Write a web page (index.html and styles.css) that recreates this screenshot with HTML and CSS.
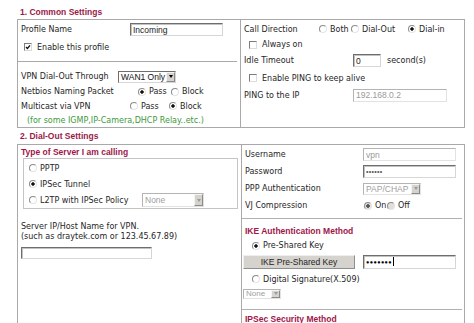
FILE: index.html
```html
<!DOCTYPE html>
<html>
<head>
<meta charset="utf-8">
<link rel="stylesheet" href="styles.css">
</head>
<body>
<div class="page">
  <div class="sec-title">1. Common Settings</div>
  <div class="box box1">
    <div class="col col-l">
      <div class="row h19"><span class="lbl w112">Profile Name</span><span class="fld f-profile">Incoming</span></div>
      <div class="row h16 ind6"><span class="chk"><svg viewBox="0 0 6 6"><path d="M1 3 L2.4 4.5 L5 1.3" /></svg></span><span class="ctext">Enable this profile</span></div>
      <div class="sep1"></div>
      <div class="row h15"><span class="lbl w100">VPN Dial-Out Through</span><span class="sel s-wan"><span class="sel-text">WAN1 Only</span><span class="arr"></span></span></div>
      <div class="row h15"><span class="lbl w120">Netbios Naming Packet</span><span class="opt o33"><span class="rd on"></span>Pass</span><span class="opt"><span class="rd"></span>Block</span></div>
      <div class="row h14"><span class="lbl w112">Multicast via VPN</span><span class="opt o39"><span class="rd"></span>Pass</span><span class="opt"><span class="rd on"></span>Block</span></div>
      <div class="row h14 note">(for some IGMP,IP-Camera,DHCP Relay..etc.)</div>
    </div>
    <div class="col col-r">
      <div class="row h18"><span class="lbl w78">Call Direction</span><span class="opt o32"><span class="rd"></span>Both</span><span class="opt o57"><span class="rd"></span>Dial-Out</span><span class="opt"><span class="rd on"></span>Dial-in</span></div>
      <div class="row h13 ind8"><span class="chk"></span><span class="ctext">Always on</span></div>
      <div class="row h19"><span class="lbl w112">Idle Timeout</span><span class="fld f-idle">0</span><span class="unit">second(s)</span></div>
      <div class="row h16 ind8"><span class="chk"></span><span class="ctext">Enable PING to keep alive</span></div>
      <div class="row h18"><span class="lbl w112">PING to the IP</span><span class="fld f-ping dis">192.168.0.2</span></div>
    </div>
  </div>

  <div class="sec-title t2">2. Dial-Out Settings</div>
  <div class="box box2">
    <div class="col col-l2">
      <div class="sub-title st-type">Type of Server I am calling</div>
      <div class="inner">
        <div class="row h16"><span class="opt"><span class="rd"></span>PPTP</span></div>
        <div class="row h16"><span class="opt"><span class="rd on"></span>IPSec Tunnel</span></div>
        <div class="row h16"><span class="opt o113"><span class="rd"></span>L2TP with IPSec Policy</span><span class="sel s-none dis"><span class="sel-text">None</span><span class="arr"></span></span></div>
      </div>
      <div class="server">
        <div class="line">Server IP/Host Name for VPN.</div>
        <div class="line">(such as draytek.com or 123.45.67.89)</div>
        <span class="fld f-server"></span>
      </div>
    </div>
    <div class="col col-r2">
      <div class="row h17 first"><span class="lbl w121">Username</span><span class="fld f-wide dis">vpn</span></div>
      <div class="row h17"><span class="lbl w121">Password</span><span class="fld f-wide pw">&#8226;&#8226;&#8226;&#8226;&#8226;&#8226;</span></div>
      <div class="row h17"><span class="lbl w121">PPP Authentication</span><span class="sel s-pap dis"><span class="sel-text">PAP/CHAP</span><span class="arr"></span></span></div>
      <div class="row h17"><span class="lbl w122">VJ Compression</span><span class="opt o23"><span class="rd on gray"></span>On</span><span class="opt"><span class="rd gray"></span>Off</span></div>
      <div class="sep2"></div>
      <div class="sub-title st-ike">IKE Authentication Method</div>
      <div class="row h15 ind10"><span class="opt"><span class="rd on"></span>Pre-Shared Key</span></div>
      <div class="row h17"><span class="btn">IKE Pre-Shared Key</span><span class="fld f-key"><span class="dots">&#9679;&#9679;&#9679;&#9679;&#9679;&#9679;&#9679;</span><span class="caret"></span></span></div>
      <div class="row h18 ind10"><span class="opt"><span class="rd"></span>Digital Signature(X.509)</span></div>
      <div class="row h11"><span class="sel s-none2 dis"><span class="sel-text">None</span><span class="arr"></span></span></div>
      <div class="sep3"></div>
      <div class="sub-title st-ipsec">IPSec Security Method</div>
    </div>
  </div>
</div>
</body>
</html>
```
FILE: styles.css
```css
html, body {
  margin: 0;
  background: #fff;
}
body {
  font-family: "DejaVu Sans", Verdana, sans-serif;
  font-size: 8px;
  color: #262626;
  overflow: hidden;
}
.page {
  padding-left: 17px;
  width: 448px;
}
.sec-title {
  height: 19px;
  box-sizing: border-box;
  padding: 7px 0 0 3px;
  font-family: "Liberation Sans", Arial, sans-serif;
  font-weight: bold;
  font-size: 8.5px;
  line-height: 10px;
  color: #991a48;
}
.sec-title.t2 {
  height: 16px;
  padding-top: 3px;
}
.box {
  border: 1px solid #a9a9a9;
  display: grid;
  box-sizing: border-box;
}
.box1 {
  grid-template-columns: 223px 1fr;
  height: 109px;
}
.box2 {
  grid-template-columns: 224px 1fr;
  height: 181px;
  overflow: hidden;
}
.col-l, .col-l2 {
  border-right: 1px solid #a9a9a9;
}
.col-r2 {
  overflow: hidden;
}
.row {
  display: flex;
  align-items: center;
  white-space: nowrap;
}
.h11 { height: 11px; }
.h13 { height: 13px; }
.h14 { height: 14px; }
.h15 { height: 15px; }
.h16 { height: 16px; }
.h17 { height: 17px; }
.h18 { height: 18px; }
.h19 { height: 19px; }
.ind6 { padding-left: 6px; }
.ind8 { padding-left: 8px; }
.ind10 { padding-left: 10px; }
.lbl {
  flex: none;
  box-sizing: border-box;
  padding-left: 3px;
}
.w78 { width: 78px; }
.w100 { width: 100px; }
.w112 { width: 112px; }
.w120 { width: 120px; }
.w121 { width: 121px; }
.w122 { width: 122px; }
.opt {
  display: flex;
  align-items: center;
  flex: none;
}
.o23 { width: 23px; }
.o33 { width: 33px; }
.o32 { width: 32px; }
.o39 { width: 39px; }
.o57 { width: 57px; }
.o113 { width: 113px; }
.rd {
  width: 8px;
  height: 8px;
  box-sizing: border-box;
  border: 1px solid;
  border-color: #8c8c8c #e4e4e4 #e4e4e4 #8c8c8c;
  border-radius: 50%;
  background: #fff;
  margin-right: 3px;
  flex: none;
}
.rd.on {
  background: radial-gradient(circle, #111 0 1.4px, #fff 2px);
}
.rd.gray {
  background: #e2dfda;
}
.rd.on.gray {
  background: radial-gradient(circle, #555 0 1.5px, #e2dfda 2.1px);
}
.chk {
  width: 8px;
  height: 8px;
  box-sizing: border-box;
  border: 1px solid;
  border-color: #7c7c7c #dcdcdc #dcdcdc #7c7c7c;
  background: #fff;
  flex: none;
  display: flex;
}
.chk svg {
  width: 6px;
  height: 6px;
}
.chk path {
  fill: none;
  stroke: #111;
  stroke-width: 1.3;
}
.ctext {
  margin-left: 5px;
}
.sep1 {
  height: 6px;
  border-bottom: 1px solid #a9a9a9;
  margin-right: 3px;
  margin-bottom: 7px;
}
.note {
  padding-left: 9px;
  color: #3d9a3d;
}
.fld {
  box-sizing: border-box;
  display: flex;
  align-items: center;
  flex: none;
  border: 1px solid;
  border-color: #6e6e6e #d6d6d6 #d6d6d6 #6e6e6e;
  box-shadow: inset 1px 1px 0 #c2c2c2;
  background: #fff;
  padding-left: 2px;
  font-family: "Liberation Sans", Arial, sans-serif;
  font-size: 8.5px;
  color: #222;
  overflow: hidden;
}
.fld.dis {
  color: #9a9a9a;
  border-color: #b4b4b4 #e2e2e2 #e2e2e2 #b4b4b4;
  box-shadow: none;
}
.f-profile { width: 93px; height: 13px; }
.f-idle { width: 28px; height: 13px; }
.f-ping { width: 94px; height: 13px; }
.f-server { width: 131px; height: 12px; display: block; margin-top: 5px; }
.f-wide { width: 93px; height: 13px; }
.f-key { width: 93px; height: 14px; margin-left: 8px; }
.pw {
  font-size: 7px;
  color: #555;
  letter-spacing: 0.3px;
}
.dots {
  font-size: 5.5px;
  color: #000;
  letter-spacing: 0.4px;
}
.caret {
  width: 1px;
  height: 9px;
  background: #000;
  margin-left: 1px;
}
.unit {
  margin-left: 6px;
}
.sel {
  box-sizing: border-box;
  display: flex;
  flex: none;
  border: 1px solid;
  border-color: #6e6e6e #d6d6d6 #d6d6d6 #6e6e6e;
  background: #fff;
  font-family: "Liberation Sans", Arial, sans-serif;
  font-size: 8.5px;
  color: #111;
}
.sel.dis {
  color: #a0a0a0;
  border-color: #b4b4b4 #e2e2e2 #e2e2e2 #b4b4b4;
}
.sel-text {
  flex: 1;
  display: flex;
  align-items: center;
  padding-left: 2px;
}
.arr {
  width: 9px;
  box-sizing: border-box;
  background: #d6d3ce;
  border: 1px solid;
  border-color: #f4f4f4 #8a8a8a #8a8a8a #f4f4f4;
  display: flex;
  align-items: center;
  justify-content: center;
}
.arr::after {
  content: "";
  border-left: 2.5px solid transparent;
  border-right: 2.5px solid transparent;
  border-top: 3px solid #000;
}
.sel.dis .arr::after {
  border-top-color: #9a9a9a;
}
.s-wan { width: 58px; height: 12px; }
.s-none { width: 62px; height: 14px; }
.s-pap { width: 58px; height: 12px; }
.s-none2 { width: 38px; height: 10px; margin-left: 1px; font-size: 8px; }
.sub-title {
  font-family: "Liberation Sans", Arial, sans-serif;
  font-weight: bold;
  font-size: 8.5px;
  line-height: 10px;
  color: #a0164a;
  padding-left: 3px;
}
.st-type {
  height: 13px;
  padding-top: 2px;
  box-sizing: border-box;
}
.inner {
  margin-left: 5px;
  width: 215px;
  height: 51px;
  box-sizing: border-box;
  border: 1px solid #c4c4c4;
  padding: 1px 0 0 5px;
}
.server {
  padding: 13px 0 0 3px;
}
.server .line {
  line-height: 10px;
}
.first {
  margin-top: 1px;
}
.sep2 {
  height: 4px;
  border-bottom: 1px solid #b0b0b0;
  margin-right: 2px;
}
.st-ike {
  margin-top: 5px;
  height: 14px;
  line-height: 14px;
}
.btn {
  width: 112px;
  height: 14px;
  box-sizing: border-box;
  margin-left: 1px;
  background: #d6d3ce;
  border: 1px solid;
  border-color: #eeeeee #8e8e8e #8e8e8e #eeeeee;
  font-family: "Liberation Sans", Arial, sans-serif;
  font-size: 8.5px;
  color: #222;
  display: flex;
  align-items: center;
  justify-content: center;
  flex: none;
}
.sep3 {
  height: 10px;
  border-bottom: 1px solid #b0b0b0;
  margin-right: 2px;
}
.st-ipsec {
  height: 18px;
  line-height: 18px;
}
```
